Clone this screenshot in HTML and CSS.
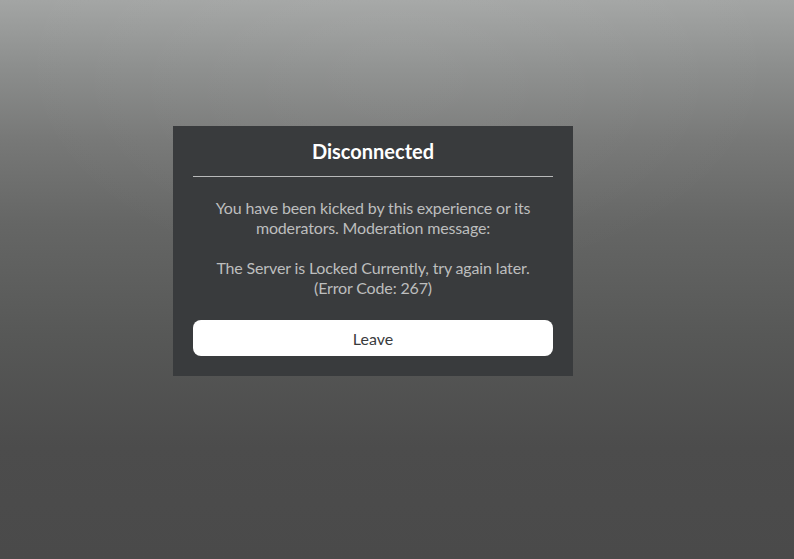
FILE: index.html
```html
<!DOCTYPE html>
<html>
<head>
<meta charset="utf-8">
<link rel="stylesheet" href="styles.css">
</head>
<body>
<div class="stage">
  <div class="modal">
    <h1 class="title">Disconnected</h1>
    <div class="divider"></div>
    <p class="message">You have been kicked by this experience or its moderators. Moderation message:<br><br>The Server is Locked Currently, try again later.<br>(Error Code: 267)</p>
    <button class="leave">Leave</button>
  </div>
</div>
</body>
</html>
```
FILE: styles.css
```css
html, body {
  margin: 0;
  padding: 0;
  height: 100%;
}
body {
  font-family: "Lato", "Open Sans", sans-serif;
  background:
    radial-gradient(ellipse 70% 60% at 50% 10%, rgba(255,255,255,0.06), rgba(0,0,0,0) 70%),
    linear-gradient(to bottom, #a3a5a4 0%, #8c8e8d 12%, #777877 25%, #656665 40%, #575857 60%, #4c4c4c 80%, #4a4a4a 100%);
}
.stage {
  height: 559px;
  display: flex;
  flex-direction: column;
  align-items: flex-start;
  padding: 126px 0 0 173px;
  box-sizing: border-box;
}
.modal {
  width: 400px;
  height: 250px;
  box-sizing: border-box;
  background: #393b3d;
  padding: 0 20px;
  display: flex;
  flex-direction: column;
  align-items: stretch;
}
.title {
  margin: 0;
  height: 50px;
  line-height: 50px;
  font-size: 20px;
  font-weight: 700;
  color: #ffffff;
  text-align: center;
}
.divider {
  height: 1px;
  background: #b8b9ba;
}
.message {
  margin: 21px 0 0;
  font-size: 16px;
  line-height: 20px;
  letter-spacing: -0.15px;
  color: #bdbebe;
  text-align: center;
  padding: 0 12px;
}
.leave {
  margin-top: 22px;
  height: 36px;
  border: none;
  border-radius: 8px;
  background: #ffffff;
  color: #393b3d;
  font-family: inherit;
  font-size: 16px;
  padding: 0;
}
```
